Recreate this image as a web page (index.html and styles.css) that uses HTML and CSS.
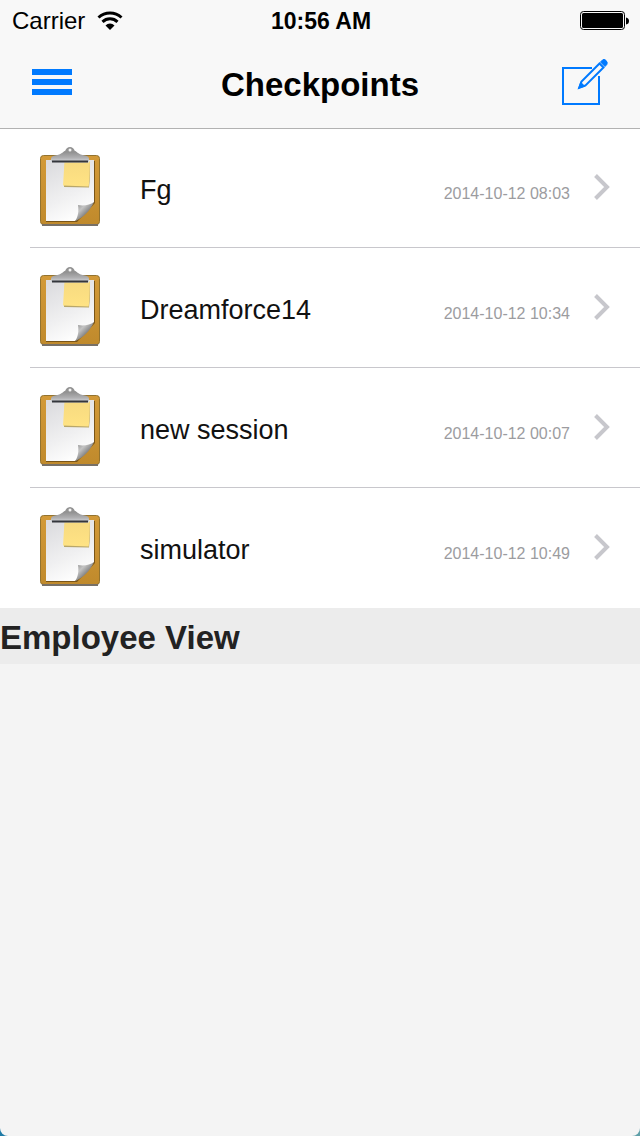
FILE: index.html
```html
<!DOCTYPE html>
<html lang="en">
<head>
    <meta charset="UTF-8">
    <meta name="viewport" content="width=device-width, initial-scale=1.0">
    <title>Checkpoints</title>
    <link rel="stylesheet" href="styles.css">
</head>
<body>
    <svg class="symbols" aria-hidden="true">
        <defs>
            <linearGradient id="wood" x1="0" y1="0" x2="0" y2="1">
                <stop offset="0" stop-color="#d39a38"/>
                <stop offset="1" stop-color="#c08a2c"/>
            </linearGradient>
            <linearGradient id="sheet" x1="0.2" y1="0" x2="0.6" y2="1">
                <stop offset="0" stop-color="#dcdcdf"/>
                <stop offset="0.6" stop-color="#f0f0f1"/>
                <stop offset="1" stop-color="#ffffff"/>
            </linearGradient>
            <linearGradient id="note" x1="0" y1="0" x2="0" y2="1">
                <stop offset="0" stop-color="#f7da80"/>
                <stop offset="1" stop-color="#ffe384"/>
            </linearGradient>
            <linearGradient id="metal" x1="0" y1="0" x2="0" y2="1">
                <stop offset="0" stop-color="#8b8b8b"/>
                <stop offset="0.6" stop-color="#b0b0b2"/>
                <stop offset="1" stop-color="#dcdee2"/>
            </linearGradient>
            <linearGradient id="curl" x1="0" y1="0" x2="1" y2="1">
                <stop offset="0" stop-color="#808080"/>
                <stop offset="0.35" stop-color="#c4c4c4"/>
                <stop offset="0.65" stop-color="#777777"/>
            </linearGradient>
            <symbol id="clipboard" viewBox="0 0 60 80">
                <rect x="0.5" y="8.5" width="59" height="69" rx="3" fill="url(#wood)" stroke="#93732f"/>
                <path d="M2 78h56" stroke="#777067" stroke-width="2"/>
                <path d="M6 14h49v42L37 75H6z" fill="#7a5517"/>
                <path d="M6 13h48v42L35 74H6z" fill="url(#sheet)"/>
                <path d="M54 55C50 64 43 71 35 74c3-4 4-10 3-16 6 1 12 0 16-3z" fill="url(#curl)"/>
                <path d="M24 40l1-25h25c-.5 8 .5 16-1 25.500z" fill="#b8a66a"/>
                <path d="M23 38.500l1.500-24h25.500c-.5 8 0 16-1.300 25z" fill="url(#note)"/>
                <path d="M11 15.500V12q0-3 4-3.500c7-1 8-4 10-4.500h10c2 .5 3 3.500 10 4.500q4 .5 4 3.500v3.500z" fill="url(#metal)"/>
                <path d="M12 14.500h36" stroke="#34363c" stroke-width="2"/>
                <path d="M23 6c3-1 2-5.500 7-6 5 .5 4 5 7 6z" fill="#939393"/>
                <circle cx="30" cy="3" r="1.500" fill="#f4f4f4"/>
            </symbol>
            <symbol id="chevron" viewBox="0 0 16 28">
                <path d="M1.500 2.500L13 14 1.500 25.500" fill="none" stroke="#c7c7cc" stroke-width="4"/>
            </symbol>
        </defs>
    </svg>

    <header class="header">
        <div class="status">
            <div class="carrier">
                <span>Carrier</span>
                <svg class="wifi" viewBox="0 0 26 20" role="img" aria-label="Wi-Fi">
                    <g fill="none" stroke="#000" stroke-width="3">
                        <path d="M1.500 6.500a17 17 0 0 1 23 0"/>
                        <path d="M5.500 10.800a10.800 10.800 0 0 1 15 0"/>
                    </g>
                    <path d="M8.500 14.500a6.200 6.200 0 0 1 9 0L13 19z"/>
                </svg>
            </div>
            <span class="time">10:56 AM</span>
            <svg class="battery" viewBox="0 0 50 20" role="img" aria-label="Battery full">
                <rect x="0.500" y="1.500" width="44" height="18" rx="3" fill="none" stroke="#000"/>
                <rect x="2" y="3" width="41" height="15" rx="1.500"/>
                <path d="M46 7.500q3 .5 3 3.500t-3 3.500z"/>
            </svg>
        </div>
        <nav class="navbar">
            <button class="nav-button" aria-label="Menu">
                <svg class="menu-icon" viewBox="0 0 40 26">
                    <path d="M0 0h40v6H0zM0 10h40v6H0zM0 20h40v6H0z" fill="#007aff"/>
                </svg>
            </button>
            <h1 class="title">Checkpoints</h1>
            <button class="nav-button compose" aria-label="New checkpoint">
                <svg class="compose-icon" viewBox="0 0 46 46">
                    <path d="M30 9H1v36h36V17" fill="none" stroke="#007aff" stroke-width="2"/>
                    <path d="M37.500 4.500L19.500 22.500l-2 6 6-2L41.500 8.500z" fill="#f8f8f8" stroke="#007aff" stroke-width="2"/>
                    <path d="M15.500 30.500l3-8 5 5z" fill="#007aff"/>
                    <path d="M38.500 3l2-2q1.500-1.500 3.500.5t.8 4L43 7.500z" fill="#007aff" stroke="#007aff"/>
                </svg>
            </button>
        </nav>
    </header>

    <main>
        <ul class="list">
            <li>
                <a href="#" class="row">
                    <svg class="clipboard"><use href="#clipboard"/></svg>
                    <span class="name">Fg</span>
                    <time class="date">2014-10-12 08:03</time>
                    <svg class="chevron"><use href="#chevron"/></svg>
                </a>
            </li>
            <li>
                <a href="#" class="row">
                    <svg class="clipboard"><use href="#clipboard"/></svg>
                    <span class="name">Dreamforce14</span>
                    <time class="date">2014-10-12 10:34</time>
                    <svg class="chevron"><use href="#chevron"/></svg>
                </a>
            </li>
            <li>
                <a href="#" class="row">
                    <svg class="clipboard"><use href="#clipboard"/></svg>
                    <span class="name">new session</span>
                    <time class="date">2014-10-12 00:07</time>
                    <svg class="chevron"><use href="#chevron"/></svg>
                </a>
            </li>
            <li>
                <a href="#" class="row">
                    <svg class="clipboard"><use href="#clipboard"/></svg>
                    <span class="name">simulator</span>
                    <time class="date">2014-10-12 10:49</time>
                    <svg class="chevron"><use href="#chevron"/></svg>
                </a>
            </li>
        </ul>
        <h2 class="section">Employee View</h2>
    </main>
</body>
</html>
```
FILE: styles.css
```css
*{
    margin: 0;
    padding: 0;
    box-sizing: border-box;
}
html{
    background: linear-gradient(to right, #1f7ba6, #5f9fa8);
}
body{
    min-height: 100vh;
    background-color: #f4f4f4;
    border-radius: 0 0 8px 8px;
    font-family: "Liberation Sans", Arial, sans-serif;
    color: #000;
}
button{
    border: none;
    background: none;
    cursor: pointer;
}
svg{
    display: block;
}
.symbols{
    position: absolute;
    width: 0;
    height: 0;
}

.header{
    position: relative;
    background-color: #f8f8f8;
    box-shadow: 0 1px #b2b2b2;
}
.status{
    display: grid;
    grid-template-columns: 1fr auto 1fr;
    align-items: center;
    height: 40px;
    padding: 0 10px 0 12px;
}
.carrier{
    display: flex;
    align-items: center;
    gap: 12px;
    padding-top: 2px;
    font-size: 24px;
}
.wifi{
    width: 26px;
    height: 20px;
}
.time{
    padding-top: 2px;
    font-size: 23px;
    font-weight: bold;
}
.battery{
    width: 50px;
    height: 20px;
    justify-self: end;
}

.navbar{
    display: grid;
    grid-template-columns: 1fr auto 1fr;
    align-items: center;
    height: 88px;
    padding: 0 32px;
}
.nav-button{
    justify-self: start;
    padding-bottom: 4px;
}
.compose{
    justify-self: end;
}
.menu-icon{
    width: 40px;
    height: 26px;
}
.compose-icon{
    width: 46px;
    height: 46px;
}
.title{
    padding-top: 2px;
    font-size: 33px;
}

.list{
    list-style: none;
    background-color: #fff;
}
.row{
    display: flex;
    align-items: center;
    height: 120px;
    margin-left: 30px;
    padding: 0 30px 2px 10px;
    border-bottom: 1px solid #c8c7cc;
    color: #111;
    text-decoration: none;
}
.list li:last-child .row{
    border-bottom-color: transparent;
}
.clipboard{
    width: 60px;
    height: 80px;
}
.name{
    flex: 1;
    margin-left: 40px;
    padding-top: 8px;
    font-size: 27px;
}
.date{
    padding-top: 14px;
    font-size: 16px;
    color: #9c9ca0;
}
.chevron{
    width: 16px;
    height: 28px;
    margin-left: 24px;
}

.section{
    padding: 10px 0 6px;
    background-color: #ececec;
    font-size: 33px;
    line-height: 40px;
    color: #222;
}
```
